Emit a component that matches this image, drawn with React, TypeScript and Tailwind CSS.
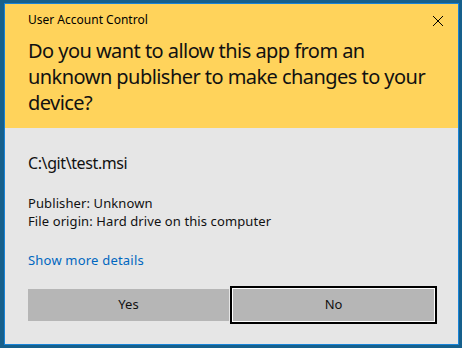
// UacDialog.tsx
// Windows "User Account Control" prompt for an unknown publisher.

export default function App() {
    return (
        <div
            className="w-[462px] h-[348px] bg-[#16608c] pl-[4px] pt-[3px] pr-[3px] pb-[3px]"
            style={{ fontFamily: '"Noto Sans", "Open Sans", sans-serif' }}
        >
            <div className="w-full h-full border border-[#1883d7] bg-[#e6e6e6] flex flex-col">
                {/* Yellow header */}
                <div className="bg-[#ffd35b] h-[124px] pl-[23px] pr-[14px] pt-[8px] text-black">
                    <div className="flex items-center justify-between">
                        <span className="text-[12px] leading-[16px]">User Account Control</span>
                        <svg width="12" height="12" viewBox="0 0 12 12" className="mt-[2px]">
                            <path d="M1 1 L11 11 M11 1 L1 11" stroke="#000" strokeWidth="1" />
                        </svg>
                    </div>
                    <p className="mt-[10px] text-[20px] leading-[26px] tracking-[-0.55px] text-[#111]">
                        Do you want to allow this app from an unknown publisher to make changes to your device?
                    </p>
                </div>

                {/* Details */}
                <div className="px-[23px] pt-[23px]">
                    <div className="text-[16px] leading-[24px] tracking-[-0.4px] text-[#111]">C:\git\test.msi</div>
                    <div className="mt-[19px] text-[13px] leading-[18px] tracking-[0.1px] text-[#111]">
                        <div>Publisher: Unknown</div>
                        <div>File origin: Hard drive on this computer</div>
                    </div>
                    <div className="mt-[21px] text-[13px] leading-[18px] tracking-[0.2px] text-[#0067c0]">Show more details</div>
                </div>

                {/* Buttons */}
                <div className="flex items-center pl-[23px] mt-[17px]">
                    <button className="w-[201px] h-[32px] bg-[#b6b6b6] text-[13px] text-[#111]">Yes</button>
                    <button className="ml-[1px] w-[207px] h-[38px] border-2 border-black bg-[#b6b6b6] text-[13px] text-[#111] shadow-[inset_0_0_0_1px_#fff]">
                        No
                    </button>
                </div>
            </div>
        </div>
    );
}
